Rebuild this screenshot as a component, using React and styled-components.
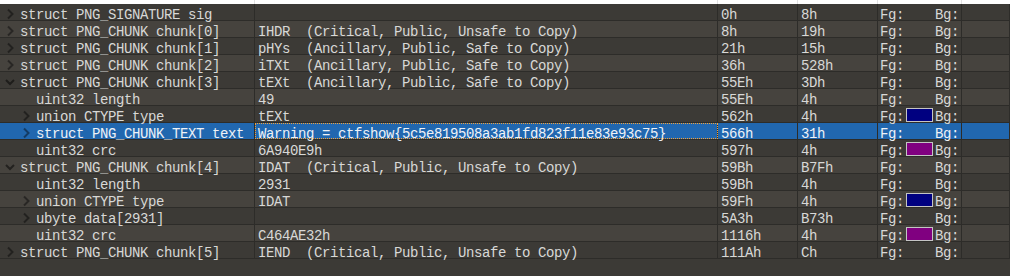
import React from "react";
import styled, { createGlobalStyle } from "styled-components";

const GlobalStyle = createGlobalStyle`
  html, body {
    margin: 0;
    padding: 0;
    background: #3c3a36;
  }
  body {
    width: 1010px;
    height: 276px;
    overflow: hidden;
  }
`;

const COLUMNS = "255px 463px 80px 80px 84px 1fr";

const Table = styled.div`
  width: 1010px;
  font-family: "Liberation Mono", "DejaVu Sans Mono", monospace;
  font-size: 14px;
  letter-spacing: -0.4px;
  color: #d8d8d6;
`;

const HeaderStrip = styled.div`
  display: grid;
  grid-template-columns: ${COLUMNS};
  height: 4px;
  background: #ffffff;
`;

const HeaderCell = styled.div`
  border-right: 1px solid #e2e2e2;
`;

const Row = styled.div`
  display: grid;
  grid-template-columns: ${COLUMNS};
  height: 17px;
  border-bottom: 1px solid #2d2c29;
  box-sizing: border-box;
  background: ${(p) => (p.$selected ? "#2167af" : p.$odd ? "#3c3a36" : "#46433e")};
  color: ${(p) => (p.$selected ? "#eef2f7" : "#d8d8d6")};
`;

const Cell = styled.div`
  position: relative;
  box-sizing: border-box;
  height: 16px;
  padding: 3px 0 0 ${(p) => p.$pad ?? 3}px;
  line-height: 16px;
  white-space: pre;
  border-right: 1px solid #2d2c29;
  outline: ${(p) => (p.$focus ? "1px dotted #f2a23a" : "none")};
  outline-offset: -1px;
`;

const NameCell = styled(Cell)`
  display: flex;
  padding-left: ${(p) => 4 + p.$level * 16}px;
`;

const Toggle = styled.span`
  display: inline-block;
  width: 16px;
  height: 13px;
  flex: none;
  position: relative;
  svg {
    position: absolute;
    left: 1px;
    top: 1px;
  }
`;

const ColorCell = styled(Cell)`
  display: flex;
  padding-left: 2px;
`;

const SwatchSlot = styled.span`
  display: inline-block;
  width: 31px;
  height: 13px;
  position: relative;
`;

const Swatch = styled.span`
  position: absolute;
  left: 2px;
  top: -1px;
  width: 27px;
  height: 14px;
  box-sizing: border-box;
  border: 1px solid #c4c4c4;
  background: ${(p) => p.$color};
`;

const Chevron = ({ open }) => (
  <svg width="10" height="12" viewBox="0 0 10 12">
    {open ? (
      <path d="M1 4 L5 8 L9 4" fill="none" stroke="rgba(0,0,0,0.5)" strokeWidth="2" />
    ) : (
      <path d="M3 1.5 L7.5 6 L3 10.5" fill="none" stroke="rgba(0,0,0,0.42)" strokeWidth="2" />
    )}
  </svg>
);

const NAVY = "#000080";
const PURPLE = "#800080";

const rows = [
  { level: 0, toggle: "closed", name: "struct PNG_SIGNATURE sig", value: "", start: "0h", size: "8h" },
  { level: 0, toggle: "closed", name: "struct PNG_CHUNK chunk[0]", value: "IHDR  (Critical, Public, Unsafe to Copy)", start: "8h", size: "19h" },
  { level: 0, toggle: "closed", name: "struct PNG_CHUNK chunk[1]", value: "pHYs  (Ancillary, Public, Safe to Copy)", start: "21h", size: "15h" },
  { level: 0, toggle: "closed", name: "struct PNG_CHUNK chunk[2]", value: "iTXt  (Ancillary, Public, Safe to Copy)", start: "36h", size: "528h" },
  { level: 0, toggle: "open", name: "struct PNG_CHUNK chunk[3]", value: "tEXt  (Ancillary, Public, Safe to Copy)", start: "55Eh", size: "3Dh" },
  { level: 1, name: "uint32 length", value: "49", start: "55Eh", size: "4h" },
  { level: 1, toggle: "closed", name: "union CTYPE type", value: "tEXt", start: "562h", size: "4h", fg: NAVY },
  { level: 1, toggle: "closed", name: "struct PNG_CHUNK_TEXT text", value: "Warning = ctfshow{5c5e819508a3ab1fd823f11e83e93c75}", start: "566h", size: "31h", selected: true },
  { level: 1, name: "uint32 crc", value: "6A940E9h", start: "597h", size: "4h", fg: PURPLE },
  { level: 0, toggle: "open", name: "struct PNG_CHUNK chunk[4]", value: "IDAT  (Critical, Public, Unsafe to Copy)", start: "59Bh", size: "B7Fh" },
  { level: 1, name: "uint32 length", value: "2931", start: "59Bh", size: "4h" },
  { level: 1, toggle: "closed", name: "union CTYPE type", value: "IDAT", start: "59Fh", size: "4h", fg: NAVY },
  { level: 1, toggle: "closed", name: "ubyte data[2931]", value: "", start: "5A3h", size: "B73h" },
  { level: 1, name: "uint32 crc", value: "C464AE32h", start: "1116h", size: "4h", fg: PURPLE },
  { level: 0, toggle: "closed", name: "struct PNG_CHUNK chunk[5]", value: "IEND  (Critical, Public, Unsafe to Copy)", start: "111Ah", size: "Ch" },
];

const App = () => {
  return (
    <>
      <GlobalStyle />
      <Table>
        <HeaderStrip>
          <HeaderCell />
          <HeaderCell />
          <HeaderCell />
          <HeaderCell />
          <HeaderCell />
          <div />
        </HeaderStrip>
        {rows.map((r, i) => (
          <Row key={i} $odd={i % 2 === 0} $selected={r.selected}>
            <NameCell $level={r.level}>
              <Toggle>{r.toggle && <Chevron open={r.toggle === "open"} />}</Toggle>
              <span>{r.name}</span>
            </NameCell>
            <Cell $focus={r.selected}>{r.value}</Cell>
            <Cell>{r.start}</Cell>
            <Cell>{r.size}</Cell>
            <ColorCell>
              <span>Fg:</span>
              <SwatchSlot>{r.fg && <Swatch $color={r.fg} />}</SwatchSlot>
              <span>Bg:</span>
            </ColorCell>
            <Cell />
          </Row>
        ))}
      </Table>
    </>
  );
};

export default App;
